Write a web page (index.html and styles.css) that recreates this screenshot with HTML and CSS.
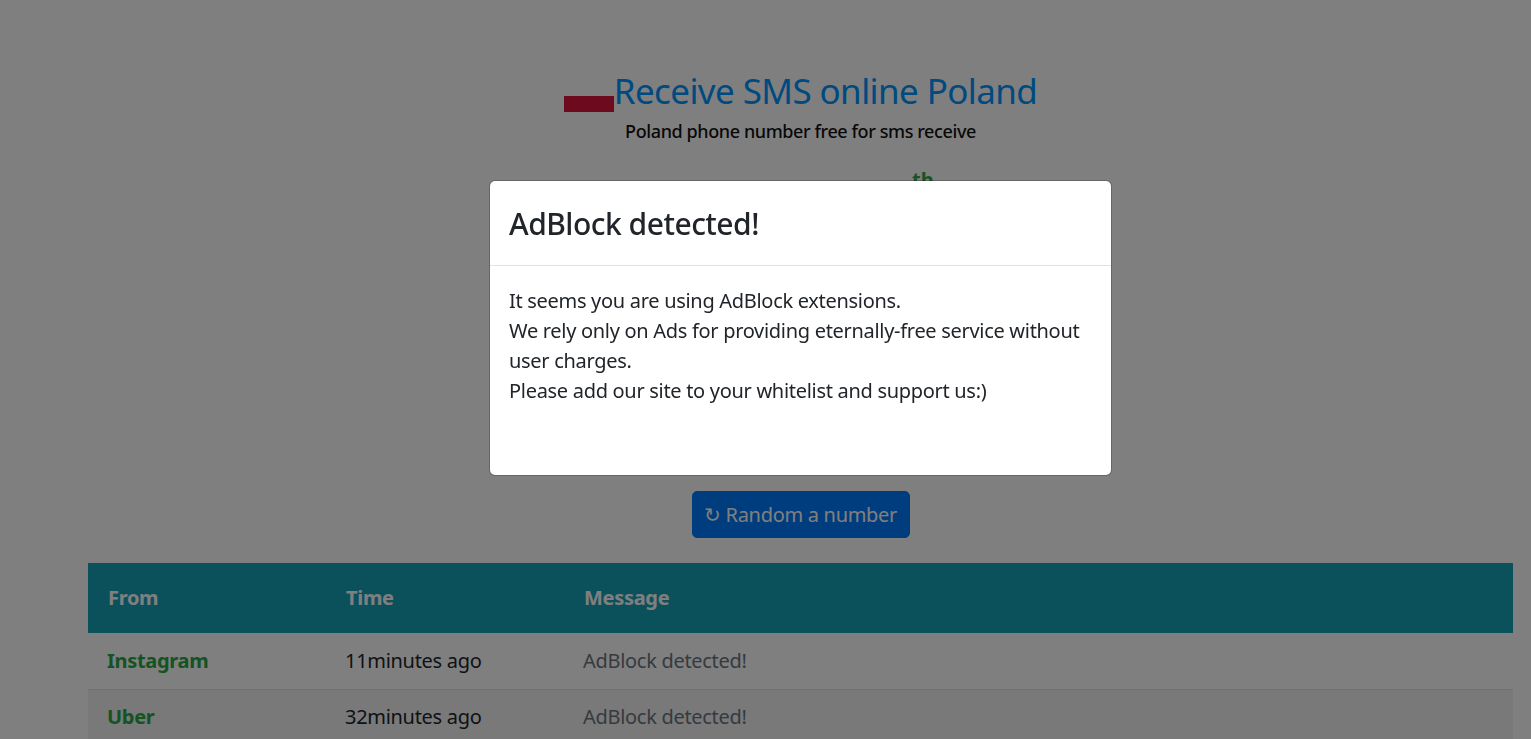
FILE: index.html
```html
<!DOCTYPE html>
<html lang="en">
<head>
<meta charset="utf-8">
<title>Receive SMS online Poland</title>
<link rel="stylesheet" href="styles.css">
</head>
<body>
<main class="page">
  <header class="head">
    <h1 class="title"><svg class="flag" viewBox="0 0 50 33" width="50" height="33"><rect width="50" height="17" fill="#fff"/><rect y="17" width="50" height="16" fill="#dc143c"/></svg>Receive SMS online Poland</h1>
    <p class="sub">Poland phone number free for sms receive</p>
  </header>
  <div class="number-zone"><span class="peek">th</span></div>
  <div class="actions"><button class="btn">↻ Random a number</button></div>
  <table class="sms">
    <thead><tr><th class="c1">From</th><th class="c2">Time</th><th>Message</th></tr></thead>
    <tbody>
      <tr><td class="from">Instagram</td><td class="time">11minutes ago</td><td class="msg">AdBlock detected!</td></tr>
      <tr class="alt"><td class="from">Uber</td><td class="time">32minutes ago</td><td class="msg">AdBlock detected!</td></tr>
    </tbody>
  </table>
</main>
<div class="backdrop"></div>
<div class="modal">
  <div class="modal-head"><h2 class="modal-title">AdBlock detected!</h2></div>
  <div class="modal-body">It seems you are using AdBlock extensions.<br>We rely only on Ads for providing eternally-free service without user charges.<br>Please add our site to your whitelist and support us:)</div>
</div>
</body>
</html>
```
FILE: styles.css
```css
* { box-sizing: border-box; }
html, body { margin: 0; height: 739px; overflow: hidden; }
body { background: #fff; color: #212529; font-family: "Noto Sans", sans-serif; font-size: 20px; line-height: 1.5; }
.page { padding: 0 18px 0 88px; }
.head { padding-top: 64px; text-align: center; }
.title { margin: 0; font-size: 35px; font-weight: 400; line-height: 54px; color: #0094ff; letter-spacing: -0.6px; height: 54px; }
.flag { vertical-align: -8px; }
.sub { margin: 0; font-size: 18px; font-weight: 500; line-height: 27px; color: #111; letter-spacing: -0.4px; }
.number-zone { height: 346px; position: relative; text-align: center; }
.peek { position: absolute; left: 824px; top: 20px; color: #2fa84f; font-size: 20px; font-weight: 700; line-height: 30px; }
.actions { text-align: center; height: 72px; }
.btn { height: 47px; width: 218px; padding: 0; border: 1px solid #007bff; border-radius: 5px; background: #007bff; color: #fff; font: inherit; letter-spacing: -0.3px; }
.sms { width: 100%; border-collapse: collapse; table-layout: fixed; }
.sms th { height: 70px; padding: 0 20px; text-align: left; background: #17a2b8; color: #fff; font-weight: 700; letter-spacing: -0.3px; }
.sms td { height: 56px; padding: 0 19px; border-bottom: 1px solid #dee2e6; letter-spacing: -0.3px; }
.c1 { width: 238px; }
.c2 { width: 238px; }
.alt td { background: rgba(0,0,0,.05); }
.from { color: #28a745; font-weight: 700; }
.time { color: #212529; }
.msg { color: #6c757d; }
.backdrop { position: fixed; inset: 0; background: rgba(0,0,0,.5); }
.modal { position: fixed; left: 489px; top: 180px; width: 623px; height: 296px; background: #fff; border: 1px solid rgba(0,0,0,.2); border-radius: 6px; background-clip: padding-box; }
.modal-head { height: 85px; padding: 20px 19px; border-bottom: 1px solid #dee2e6; }
.modal-title { margin: 0; font-size: 30px; font-weight: 500; line-height: 45px; letter-spacing: -0.5px; }
.modal-body { padding: 20px 19px; letter-spacing: -0.3px; }
```
